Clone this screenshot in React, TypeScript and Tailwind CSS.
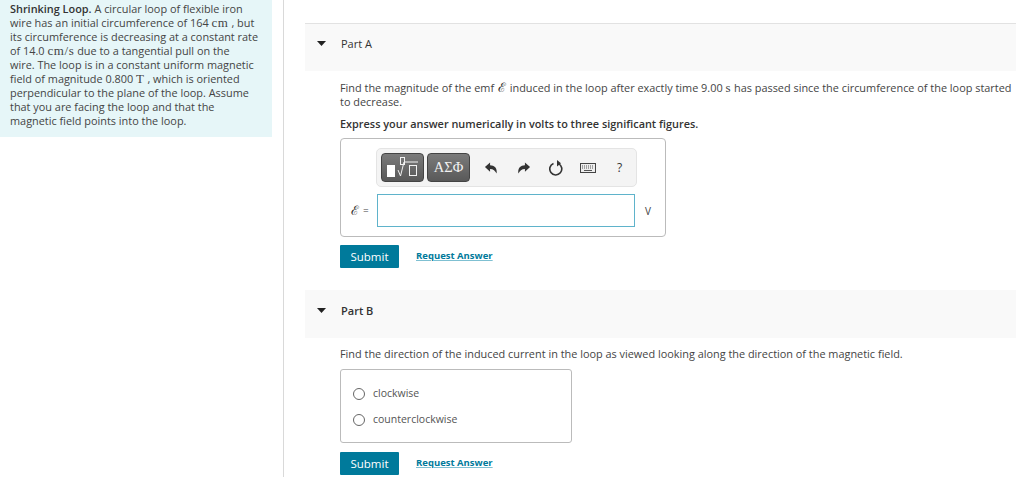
const font = { fontFamily: '"Open Sans", "Noto Sans", sans-serif' };

function Caret() {
  return (
    <svg width="9" height="5" viewBox="0 0 9 5" className="shrink-0">
      <path d="M0 0h9L4.5 5z" fill="#222" />
    </svg>
  );
}

function Emf() {
  return <span className="inline-block w-[10px] text-center font-['Liberation_Serif'] text-[13px] text-[#333] leading-none">ℰ</span>;
}

function Serif({ children }: { children: string }) {
  return <span className="font-['Liberation_Serif'] text-[13px] tracking-[0.6px]">{children}</span>;
}

function SubmitRow() {
  return (
    <div className="flex items-center h-[23px]">
      <button className="w-[59px] h-[23px] bg-[#007a9b] text-white text-[11.5px] rounded-[1px]">Submit</button>
      <a className="ml-[17px] text-[9.5px] font-bold text-[#007a9b] underline decoration-[#7fc0d2]">Request Answer</a>
    </div>
  );
}

function MathButton() {
  return (
    <div className="w-[43px] h-[29px] rounded-[4px] border border-[#444] bg-gradient-to-b from-[#7b7b7b] to-[#595959] flex items-center justify-center gap-[2px]">
      <div className="w-[8px] h-[12px] bg-white mt-[6px]" />
      <svg width="22" height="21" viewBox="0 0 22 21" fill="none" stroke="#f2f2f2" strokeWidth="1">
        <rect x="3.5" y="0.5" width="4" height="7" />
        <path d="M1 13l2.5 6L7 5h14" />
        <rect x="12.5" y="8.5" width="7" height="10" />
      </svg>
    </div>
  );
}

const arrow = 'M1 6 L6.5 1 V4 C11 4 14.5 7 13.5 13 C12 10 10 8 6.5 8 V11 Z';

function Toolbar() {
  return (
    <div className="w-[261px] h-[39px] bg-[#f4f4f4] border border-[#e4e4e4] rounded-[5px] flex items-center pl-[4px] text-[#333]">
      <MathButton />
      <div className="ml-[3px] w-[43px] h-[29px] rounded-[4px] border border-[#444] bg-gradient-to-b from-[#7b7b7b] to-[#595959] flex items-center justify-center text-[#f2f2f2] text-[14.5px] font-['Liberation_Serif']">
        ΑΣΦ
      </div>
      <svg width="14" height="14" viewBox="0 0 15 14" className="ml-[14px]">
        <path d={arrow} fill="#333" />
      </svg>
      <svg width="14" height="14" viewBox="0 0 15 14" className="ml-[19px] -scale-x-100">
        <path d={arrow} fill="#333" />
      </svg>
      <svg width="15" height="16" viewBox="0 0 15 16" fill="none" className="ml-[18px]">
        <path d="M9.5 3.6A6 6 0 1 1 4.5 3.4" stroke="#333" strokeWidth="1.6" />
        <path d="M8 0l4 3.2L8 6.4z" fill="#333" />
      </svg>
      <svg width="16" height="10" viewBox="0 0 16 10" className="ml-[16px]">
        <rect x="0.5" y="0.5" width="15" height="9" fill="#eee" stroke="#444" />
        <path d="M2 3h12M2 5h12" stroke="#555" strokeDasharray="1 1" />
        <path d="M4 7.5h8" stroke="#555" />
      </svg>
      <span className="ml-[21px] text-[12px]">?</span>
    </div>
  );
}

export default function App() {
  return (
    <div style={font} className="flex h-[477px] w-[1024px] overflow-hidden bg-white text-[#444]">
      <aside className="w-[284px] shrink-0 border-r border-[#d9d9d9]">
        <div className="w-[272px] h-[137px] bg-[#e6f6f8] pl-[10px] pr-[8px] pt-[2px] text-[10.9px] leading-[14px] text-[#444]">
          <b className="font-semibold text-[#333]">Shrinking Loop.</b> A circular loop of flexible iron<br />
          wire has an initial circumference of 164 <Serif>cm</Serif> , but<br />
          its circumference is decreasing at a constant rate<br />
          of 14.0 <Serif>cm/s</Serif> due to a tangential pull on the<br />
          wire. The loop is in a constant uniform magnetic<br />
          field of magnitude 0.800 <Serif>T</Serif> , which is oriented<br />
          perpendicular to the plane of the loop. Assume<br />
          that you are facing the loop and that the<br />
          magnetic field points into the loop.
        </div>
      </aside>

      <main className="ml-[21px] w-[711px] shrink-0 pt-[23px]">
        <div className="border-t border-[#e2e2e2]">
          <div className="h-[47px] bg-[#f9f9f9] flex items-start pl-[12px] pt-[12px]">
            <div className="h-[15px] flex items-center">
              <Caret />
            </div>
            <span className="ml-[15px] text-[11px] leading-[15px] text-[#333]">Part A</span>
          </div>
        </div>
        <div className="pl-[35px] pt-[10px]">
          <p className="text-[10.9px] leading-[14px]">
            Find the magnitude of the emf <Emf /> induced in the loop after exactly time 9.00 <Serif>s</Serif> has passed since the circumference of the loop started to decrease.
          </p>
          <p className="mt-[8px] text-[10.9px] leading-[14px] font-semibold text-[#333]">
            Express your answer numerically in volts to three significant figures.
          </p>
          <div className="mt-[7px] w-[326px] h-[99px] border border-[#bbb] rounded-[4px] pt-[9px]">
            <div className="pl-[35px]">
              <Toolbar />
            </div>
            <div className="mt-[7px] flex items-center h-[33px] pl-[9px]">
              <Emf />
              <span className="ml-[3px] w-[6px] text-[10px]">=</span>
              <div className="ml-[8px] w-[258px] h-[33px] border border-[#5fb3cb] bg-white" />
              <span className="ml-[10px] mt-[2px] text-[10px]">V</span>
            </div>
          </div>
          <div className="mt-[8px]">
            <SubmitRow />
          </div>
        </div>

        <div className="mt-[22px] h-[48px] bg-[#f9f9f9] flex items-start pl-[12px] pt-[13px]">
          <div className="h-[15px] flex items-center">
            <Caret />
          </div>
          <span className="ml-[15px] text-[11px] leading-[15px] font-semibold text-[#333]">Part B</span>
        </div>
        <div className="pl-[35px] pt-[9px]">
          <p className="text-[10.9px] leading-[14px]">
            Find the direction of the induced current in the loop as viewed looking along the direction of the magnetic field.
          </p>
          <div className="mt-[8px] w-[232px] h-[74px] border border-[#bbb] rounded-[3px] pl-[12px] pt-[16px] text-[#555]">
            <div className="flex items-center h-[15px] gap-[8px] text-[10.5px]">
              <span className="w-[12px] h-[12px] rounded-full border border-[#666] bg-white" />
              clockwise
            </div>
            <div className="mt-[11px] flex items-center h-[15px] gap-[8px] text-[10.5px]">
              <span className="w-[12px] h-[12px] rounded-full border border-[#666] bg-white" />
              counterclockwise
            </div>
          </div>
          <div className="mt-[9px]">
            <SubmitRow />
          </div>
        </div>
      </main>
    </div>
  );
}
